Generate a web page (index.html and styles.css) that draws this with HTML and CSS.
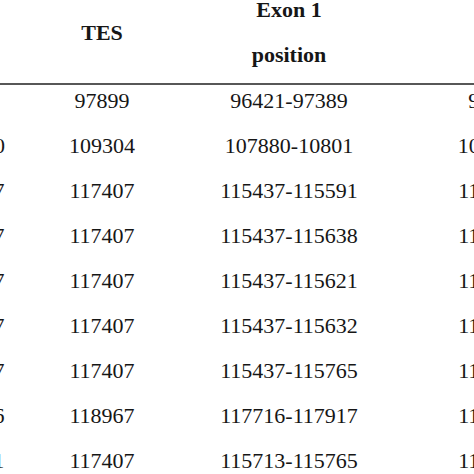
FILE: index.html
```html
<!DOCTYPE html>
<html>
<head>
<meta charset="utf-8">
<link rel="stylesheet" href="styles.css">
</head>
<body>
<div class="frame">
<table class="genes">
  <colgroup>
    <col class="c-tss">
    <col class="c-tes">
    <col class="c-ex1">
    <col class="c-ex2">
  </colgroup>
  <thead>
    <tr>
      <th>TSS</th>
      <th>TES</th>
      <th>Exon 1<br>position</th>
      <th>Exon 2<br>position</th>
    </tr>
  </thead>
  <tbody>
    <tr><td>96421</td><td>97899</td><td>96421-97389</td><td>97506-97899</td></tr>
    <tr><td>107880</td><td>109304</td><td>107880-10801</td><td>108911-109304</td></tr>
    <tr><td>115437</td><td>117407</td><td>115437-115591</td><td>116875-117407</td></tr>
    <tr><td>115437</td><td>117407</td><td>115437-115638</td><td>116875-117407</td></tr>
    <tr><td>115437</td><td>117407</td><td>115437-115621</td><td>116875-117407</td></tr>
    <tr><td>115437</td><td>117407</td><td>115437-115632</td><td>116875-117407</td></tr>
    <tr><td>115437</td><td>117407</td><td>115437-115765</td><td>116875-117407</td></tr>
    <tr><td>117716</td><td>118967</td><td>117716-117917</td><td>118420-118967</td></tr>
    <tr><td>115711</td><td>117407</td><td>115713-115765</td><td>116875-117407</td></tr>
  </tbody>
</table>
</div>
</body>
</html>
```

FILE: styles.css
```css
html, body {
  margin: 0;
  padding: 0;
  background: #ffffff;
}

.frame {
  width: 474px;
  height: 474px;
  overflow: hidden;
}

.genes {
  table-layout: fixed;
  border-collapse: separate;
  border-spacing: 0;
  width: 736px;
  margin-left: -100px;
  margin-top: -13px;
  font-family: "Liberation Serif", "Times New Roman", serif;
  font-size: 22px;
  color: #161616;
}

.c-tss { width: 144px; }
.c-tes { width: 116px; }
.c-ex1 { width: 258px; }
.c-ex2 { width: 218px; }

.genes th {
  font-weight: bold;
  line-height: 45px;
  padding: 0 0 6px;
  text-align: center;
  vertical-align: middle;
  border-bottom: 2px solid #575757;
  white-space: nowrap;
}

.genes td {
  line-height: 32px;
  padding: 0 0 13px;
  text-align: center;
  white-space: nowrap;
}
```
